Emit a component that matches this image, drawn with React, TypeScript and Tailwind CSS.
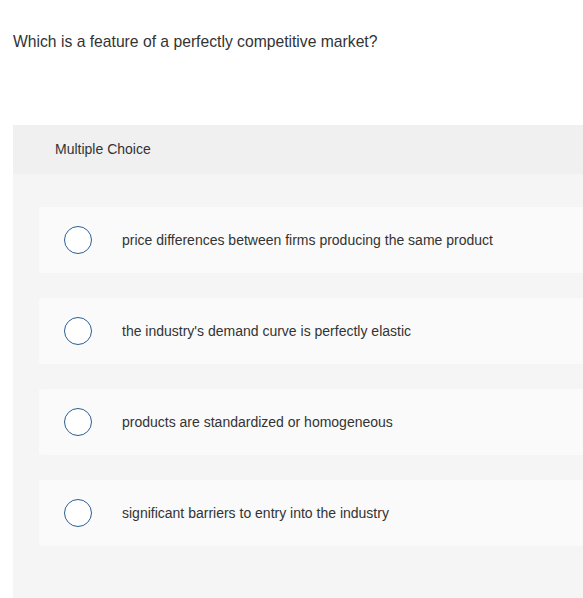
const options = [
  'price differences between firms producing the same product',
  "the industry's demand curve is perfectly elastic",
  'products are standardized or homogeneous',
  'significant barriers to entry into the industry',
];

export default function App() {
  return (
    <div className="min-h-[598px] bg-white font-['Liberation_Sans',Arial,sans-serif] text-[#333]">
      <div className="px-[13px] pt-[32px] pb-[73px]">
        <p className="text-[15.7px] leading-5">Which is a feature of a perfectly competitive market?</p>
      </div>

      <div className="ml-[13px] min-h-[473px] bg-[#f5f5f5]">
        <div className="flex h-[49px] items-center bg-[#f0f0f0] pl-[42px] text-[14px]">Multiple Choice</div>
        <div className="flex flex-col gap-[25px] pt-[33px] pl-[26px]">
          {options.map((opt) => (
            <label key={opt} className="flex h-[66px] cursor-pointer items-center rounded-l-[3px] bg-[#fafafa] pl-[25px]">
              <span className="h-[28px] w-[28px] shrink-0 rounded-full border-[1.5px] border-[#2b5f94] bg-white" />
              <span className="pl-[30px] text-[14px]">{opt}</span>
            </label>
          ))}
        </div>
      </div>
    </div>
  );
}
